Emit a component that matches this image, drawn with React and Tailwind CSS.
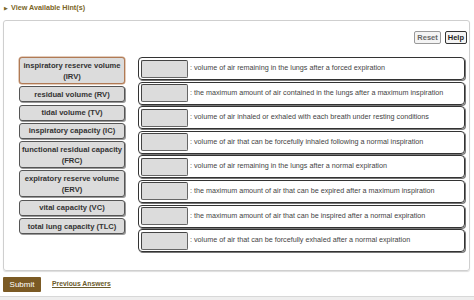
import React from 'react';

const terms = [
  ['inspiratory reserve volume', '(IRV)'],
  ['residual volume (RV)'],
  ['tidal volume (TV)'],
  ['inspiratory capacity (IC)'],
  ['functional residual capacity', '(FRC)'],
  ['expiratory reserve volume', '(ERV)'],
  ['vital capacity (VC)'],
  ['total lung capacity (TLC)'],
];

const definitions = [
  'volume of air remaining in the lungs after a forced expiration',
  'the maximum amount of air contained in the lungs after a maximum inspiration',
  'volume of air inhaled or exhaled with each breath under resting conditions',
  'volume of air that can be forcefully inhaled following a normal inspiration',
  'volume of air remaining in the lungs after a normal expiration',
  'the maximum amount of air that can be expired after a maximum inspiration',
  'the maximum amount of air that can be inspired after a normal expiration',
  'volume of air that can be forcefully exhaled after a normal expiration',
];

export default function App() {
  return (
    <div className="w-[474px] h-[300px] bg-white overflow-hidden font-['Liberation_Sans',Arial,sans-serif] relative">
      {/* hint toggle */}
      <div className="flex items-center h-[16px] pl-[4px] pt-[1px]">
        <span className="text-[#7a6526] text-[5px] leading-none mr-[3px]">&#9654;</span>
        <span className="text-[#7a6526] text-[7.2px] font-bold">View Available Hint(s)</span>
      </div>

      {/* question panel */}
      <div className="mt-[4px] ml-[3px] w-[467px] h-[251px] border border-[#cfcfcf] rounded-[3px] shadow-[0_1px_1px_#ddd]">
        <div className="flex justify-end gap-[4px] pt-[10px] pr-[2px]">
          <button className="h-[13px] px-[2px] border border-[#999] rounded-[2px] bg-[#f4f4f4] text-[#666] text-[7.5px] font-bold leading-none">
            Reset
          </button>
          <button className="h-[13px] px-[2px] border border-[#333] rounded-[2px] bg-[#f4f4f4] text-[#222] text-[7.5px] font-bold leading-none">
            Help
          </button>
        </div>

        <div className="flex mt-[13px] pl-[15px] pr-[4px]">
          {/* terms */}
          <div className="w-[106px] flex flex-col gap-[2.3px]">
            {terms.map((t, i) => (
              <div
                key={t[0]}
                className={`rounded-[3px] bg-[#dcdcdc] text-[#333] text-[7.6px] font-bold leading-[11px] text-center whitespace-nowrap py-[1.5px] border ${
                  i === 0 ? 'border-[#b07a55] shadow-[0_0_0_0.5px_#c89a78]' : 'border-[#555] shadow-[1px_1px_0_#999]'
                }`}
              >
                {t.map((line) => (
                  <div key={line}>{line}</div>
                ))}
              </div>
            ))}
          </div>

          {/* definitions */}
          <div className="ml-[13px] flex-1 flex flex-col gap-[1.6px]">
            {definitions.map((d) => (
              <div
                key={d}
                className="h-[23px] flex items-center border border-[#333] rounded-[4px] shadow-[1px_1px_0_#777] pl-[2px]"
              >
                <div className="w-[47px] h-[18px] bg-[#dcdcdc] border border-[#666] border-t-[#444] border-l-[#444] rounded-[2px] shrink-0" />
                <span className="ml-[2px] text-[#444] text-[7.2px] whitespace-nowrap">: {d}</span>
              </div>
            ))}
          </div>
        </div>
      </div>

      {/* footer */}
      <div className="flex items-center mt-[6px] ml-[3px]">
        <button className="w-[38px] h-[15px] bg-[#7b5a24] text-white text-[8px] leading-none rounded-[1px]">
          Submit
        </button>
        <span className="ml-[11px] text-[#6b5a2a] text-[6.8px] font-bold underline">Previous Answers</span>
      </div>
      <div className="absolute left-0 right-0 top-[296px] h-[4px] bg-[#eeeeee] border-t border-[#d8d8d8]" />
    </div>
  );
}
